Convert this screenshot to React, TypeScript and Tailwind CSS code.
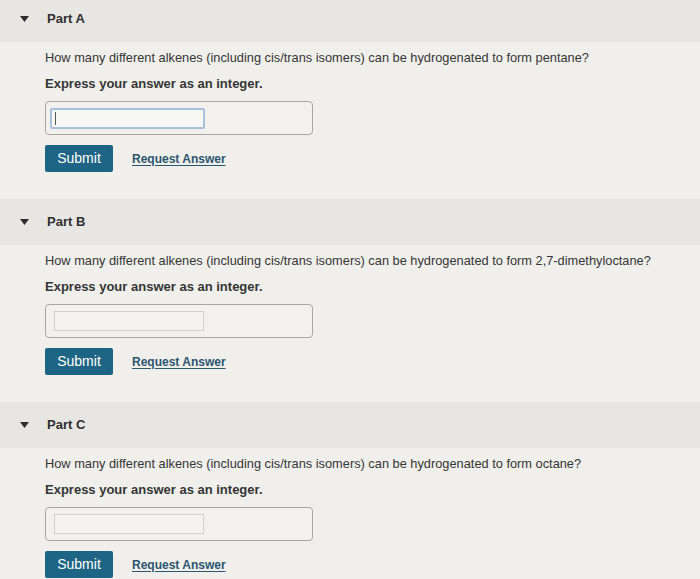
const parts = [
  { name: "Part A", target: "pentane", focused: true },
  { name: "Part B", target: "2,7-dimethyloctane", focused: false },
  { name: "Part C", target: "octane", focused: false },
];

function Caret() {
  return (
    <svg width="9" height="6" viewBox="0 0 9 6" className="shrink-0">
      <path d="M0 0 L9 0 L4.5 6 Z" fill="#2e2e2e" />
    </svg>
  );
}

function Part({ name, target, focused }: { name: string; target: string; focused: boolean }) {
  return (
    <section>
      {/* Collapsible header band */}
      <div className="h-[46px] bg-[#e8e6e2] flex items-center pl-[20px]">
        <Caret />
        <h2 className="ml-[18px] text-[13px] font-bold text-[#2f2f2f]">{name}</h2>
      </div>

      <div className="pl-[45px] pt-[8px] pb-[27px]">
        <p className="text-[12.8px] leading-4 text-[#363636]">
          How many different alkenes (including cis/trans isomers) can be hydrogenated to form {target}?
        </p>
        <p className="mt-[10px] text-[13px] leading-4 font-bold text-[#353535]">
          Express your answer as an integer.
        </p>

        <div className="mt-[9px] w-[268px] h-[34px] border border-[#a8a7a3] rounded-[4px] bg-[#f2f1ee] flex items-center pl-[4px]">
          {focused ? (
            <div className="w-[155px] h-[21px] border-2 border-[#a9c0dc] rounded-[2px] bg-[#f7f7f5] flex items-center pl-[3px]">
              <span className="w-px h-[13px] bg-[#555]" />
            </div>
          ) : (
            <div className="ml-[4px] w-[150px] h-[20px] border border-[#d2d1ce] bg-[#f4f3f0]" />
          )}
        </div>

        <div className="mt-[10px] flex items-center">
          <button className="w-[68px] h-[27px] bg-[#1e6585] rounded-[2px] text-white text-[14px]">
            Submit
          </button>
          <a className="ml-[19px] text-[12px] font-bold text-[#2c5670] underline underline-offset-2">
            Request Answer
          </a>
        </div>
      </div>
    </section>
  );
}

export default function App() {
  return (
    <div className="w-[700px] h-[579px] overflow-hidden bg-[#f0efeb]" style={{ fontFamily: '"Liberation Sans", Arial, sans-serif' }}>
      <div className="-mt-[4px]">
        {parts.map((p) => (
          <Part key={p.name} {...p} />
        ))}
      </div>
    </div>
  );
}
